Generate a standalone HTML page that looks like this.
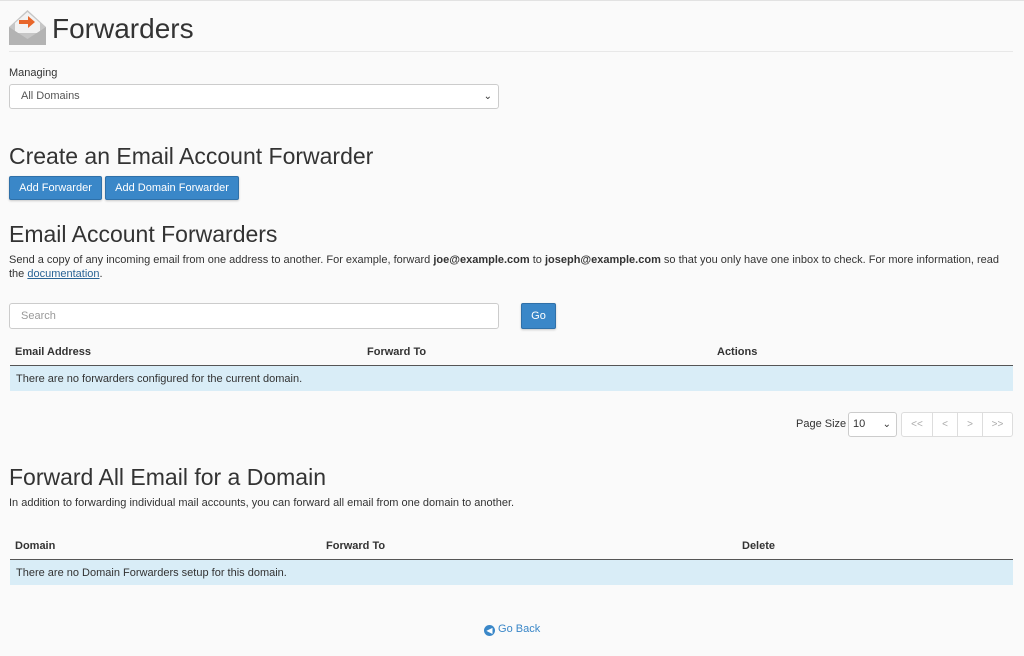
<!DOCTYPE html>
<html><head><meta charset="utf-8"><style>
*{box-sizing:border-box}
body{margin:0;width:1024px;height:656px;overflow:hidden;background:#fafafa;font-family:"Liberation Sans",sans-serif;color:#333;font-size:11px;border-top:1px solid #e2e2e2;position:relative}
.a{position:absolute}
h1,h2{font-weight:normal;margin:0;color:#333;position:absolute;white-space:nowrap}
.btn{position:absolute;background:#3a87c8;color:#fff;border:1px solid #2f70a8;border-radius:2px;font-size:11px;text-align:center;box-shadow:0 1px 2px rgba(0,0,0,.2)}
.inp{position:absolute;background:#fff;border:1px solid #ccc;border-radius:3px;font-size:11px;color:#555;padding-left:11px}
.th{position:absolute;font-weight:bold;font-size:11px;color:#333}
.row{position:absolute;left:10px;width:1003px;background:#d9edf7;border-top:1px solid #555;height:26px;line-height:26px;padding-left:6px;font-size:11px}
</style></head><body>
<svg class="a" style="left:9px;top:8px" width="37" height="37" viewBox="0 0 37 37"><path d="M0 18 L18.5 1 L37 18 L37 36 L0 36Z" fill="#c6c6c6"/><path d="M6 14 L18.5 3 L31 14 L31 24 L6 24Z" fill="#f2f2f2"/><path d="M0 18 L18.5 30 L37 18 L37 36 L0 36Z" fill="#b3b3b3"/><path d="M10 11h9v-4l7 6-7 6v-4h-9z" fill="#e8662a"/></svg>
<h1 style="left:52px;top:12px;font-size:28px">Forwarders</h1>
<div class="a" style="left:9px;top:50px;width:1004px;border-top:1px solid #e8e8e8"></div>
<div class="a" style="left:9px;top:66px">Managing</div>
<div class="inp" style="left:9px;top:83px;width:490px;height:25px;line-height:23px">All Domains<span style="position:absolute;right:6px;top:0;color:#333;font-size:10px">&#8964;</span></div>
<h2 style="left:9px;top:142px;font-size:23px">Create an Email Account Forwarder</h2>
<div class="btn" style="left:9px;top:175px;width:93px;height:24px;line-height:22px">Add Forwarder</div>
<div class="btn" style="left:105px;top:175px;width:134px;height:24px;line-height:22px">Add Domain Forwarder</div>
<h2 style="left:9px;top:220px;font-size:23px">Email Account Forwarders</h2>
<div class="a" style="left:9px;top:252px;width:1000px;line-height:14px">Send a copy of any incoming email from one address to another. For example, forward <b>joe@example.com</b> to <b>joseph@example.com</b> so that you only have one inbox to check. For more information, read the <span style="color:#2a6496;text-decoration:underline">documentation</span>.</div>
<div class="inp" style="left:9px;top:302px;width:490px;height:26px;line-height:24px;color:#999">Search</div>
<div class="btn" style="left:521px;top:302px;width:35px;height:26px;line-height:24px">Go</div>
<div class="th" style="left:15px;top:345px">Email Address</div>
<div class="th" style="left:367px;top:345px">Forward To</div>
<div class="th" style="left:717px;top:345px">Actions</div>
<div class="row" style="top:364px">There are no forwarders configured for the current domain.</div>
<div class="a" style="left:796px;top:417px">Page Size</div>
<div class="inp" style="left:848px;top:411px;width:49px;height:25px;line-height:23px;padding-left:4px;color:#333">10<span style="position:absolute;right:5px;font-size:10px">&#8964;</span></div>
<div class="a" style="left:901px;top:411px;width:112px;height:25px;border:1px solid #ddd;background:#fff;border-radius:3px;display:flex;color:#aaa;font-size:10px">
<div style="width:31px;text-align:center;line-height:23px;border-right:1px solid #ddd">&lt;&lt;</div><div style="width:25px;text-align:center;line-height:23px;border-right:1px solid #ddd">&lt;</div><div style="width:25px;text-align:center;line-height:23px;border-right:1px solid #ddd">&gt;</div><div style="flex:1;text-align:center;line-height:23px">&gt;&gt;</div></div>
<h2 style="left:9px;top:463px;font-size:23px">Forward All Email for a Domain</h2>
<div class="a" style="left:9px;top:496px">In addition to forwarding individual mail accounts, you can forward all email from one domain to another.</div>
<div class="th" style="left:15px;top:539px">Domain</div>
<div class="th" style="left:326px;top:539px">Forward To</div>
<div class="th" style="left:742px;top:539px">Delete</div>
<div class="row" style="top:558px">There are no Domain Forwarders setup for this domain.</div>
<div class="a" style="left:484px;top:622px;color:#3a87c8"><span style="display:inline-block;width:11px;height:11px;border-radius:50%;background:#3a87c8;color:#fff;font-size:8px;line-height:11px;text-align:center;vertical-align:-1px">&#9664;</span> Go Back</div>
</body></html>
